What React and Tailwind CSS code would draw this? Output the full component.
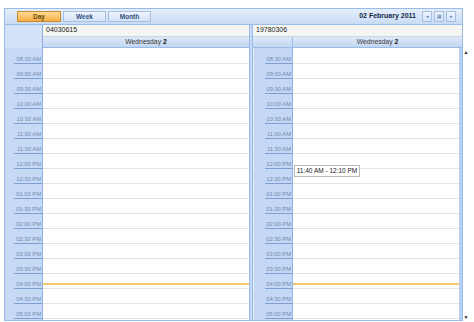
import React from 'react';

const times = [
  '08:30 AM', '09:00 AM', '09:30 AM', '10:00 AM', '10:30 AM', '11:00 AM', '11:30 AM',
  '12:00 PM', '12:30 PM', '01:00 PM', '01:30 PM', '02:00 PM', '02:30 PM', '03:00 PM',
  '03:30 PM', '04:00 PM', '04:30 PM', '05:00 PM',
];

function TimeColumn({ lineClass }) {
  return (
    <div className="flex flex-col">
      <div className="h-[1px]" />
      {times.map((t) => (
        <div key={t} className="h-[15px] shrink-0 flex items-end justify-end">
          <div className={`${lineClass} border-b border-[#7f9fd0] text-right pr-[1px] text-[5.8px] leading-[8px] text-[#7189b3]`}>
            {t}
          </div>
        </div>
      ))}
    </div>
  );
}

function DayColumn({ children }) {
  return (
    <div className="relative flex-1 bg-white flex flex-col overflow-hidden">
      <div className="h-[1px]" />
      {times.map((t) => (
        <div key={t} className="h-[15px] shrink-0 border-b border-[#e4e4e4]" />
      ))}
      <div className="absolute left-0 right-0 top-[235px] h-[2px] bg-[#f6c56f]" />
      {children}
    </div>
  );
}

function ToolButton({ label, active }) {
  return (
    <div
      className={
        active
          ? 'w-[44px] h-[11px] flex items-center justify-center border border-[#c68b2c] bg-gradient-to-b from-[#ffdc93] to-[#f8ae43] text-[6.5px] font-bold text-[#6b4a10]'
          : 'w-[43px] h-[11px] flex items-center justify-center border border-[#a7c0e2] bg-gradient-to-b from-[#eef4fc] to-[#d3e2f6] text-[6.5px] font-bold text-[#2f4f7f]'
      }
    >
      {label}
    </div>
  );
}

function NavButton({ children }) {
  return (
    <div className="w-[10px] h-[11px] flex items-center justify-center border border-[#a7c0e2] bg-gradient-to-b from-[#eef4fc] to-[#d3e2f6] text-[5px] leading-none text-[#5d7fb3]">
      {children}
    </div>
  );
}

function ResourceHeader({ name }) {
  return (
    <div className="h-[12px] shrink-0 flex items-center pl-[3px] bg-[#f5f5f2] border-b border-[#c8d6ea] text-[7px] text-[#222]">
      {name}
    </div>
  );
}

function DayHeader({ className = '' }) {
  return (
    <div className={`h-[11px] shrink-0 flex items-center justify-center bg-gradient-to-b from-[#dde8f7] to-[#c3d7f1] border-b border-[#99bbe8] text-[6.8px] text-[#3a3a3a] ${className}`}>
      Wednesday&nbsp;<span className="font-bold text-[#111]">2</span>
    </div>
  );
}

export default function App() {
  return (
    <div className="w-[474px] h-[322px] bg-white overflow-hidden font-['Liberation_Sans',Arial,sans-serif] pt-[8px] pl-[4px] flex">
      <div className="w-[459px] h-[313px] flex flex-col border border-[#99bbe8] bg-[#c7dbf5]">
        {/* toolbar */}
        <div className="h-[16px] shrink-0 flex items-center pl-[12px] pr-[6px] gap-[2px] bg-gradient-to-b from-[#e4eefa] to-[#c9dcf4] border-b border-[#99bbe8]">
          <ToolButton label="Day" active />
          <ToolButton label="Week" />
          <ToolButton label="Month" />
          <div className="flex-1" />
          <div className="text-[7px] font-bold text-[#15294a] mr-[4px]">02 February 2011</div>
          <div className="flex gap-[2px]">
            <NavButton>◂</NavButton>
            <NavButton>▦</NavButton>
            <NavButton>▸</NavButton>
          </div>
        </div>

        {/* body */}
        <div className="flex-1 flex overflow-hidden">
          {/* shared time column */}
          <div className="w-[38px] shrink-0 flex flex-col bg-[#c6daf6] border-r border-[#8fb0e0]">
            <div className="h-[23px] shrink-0 bg-[#d3e2f6]" />
            <TimeColumn lineClass="w-[28px]" />
          </div>

          {/* resource 1 */}
          <div className="w-[207px] shrink-0 flex flex-col border-r border-[#99bbe8]">
            <ResourceHeader name="04030615" />
            <DayHeader />
            <DayColumn />
          </div>

          <div className="w-[2px] shrink-0 bg-[#c6daf6]" />

          {/* resource 2 */}
          <div className="flex-1 flex flex-col border-l border-[#99bbe8]">
            <ResourceHeader name="19780306" />
            <div className="flex">
              <div className="w-[40px] shrink-0 h-[11px] bg-gradient-to-b from-[#dde8f7] to-[#c3d7f1] border-b border-r border-[#99bbe8]" />
              <DayHeader className="flex-1" />
            </div>
            <div className="flex-1 flex overflow-hidden">
              <div className="w-[40px] shrink-0 bg-[#c4d8f5] border-r border-[#8fb0e0] border-l border-l-[#e3edfa]">
                <TimeColumn lineClass="w-[27px]" />
              </div>
              <DayColumn>
                <div className="absolute left-[1px] top-[117px] w-[66px] h-[12px] flex items-center justify-center bg-white border border-[#b9b9b9] text-[6.5px] text-[#222]">
                  11:40 AM - 12:10 PM
                </div>
              </DayColumn>
              <div className="w-[3px] shrink-0 bg-[#b7cff0]" />
            </div>
          </div>
        </div>
      </div>

      {/* scrollbar arrows */}
      <div className="w-[6px] h-[312px] flex flex-col justify-between items-center pt-[42px] text-[5px] leading-none text-[#222]">
        <span>▲</span>
        <span>▼</span>
      </div>
    </div>
  );
}
